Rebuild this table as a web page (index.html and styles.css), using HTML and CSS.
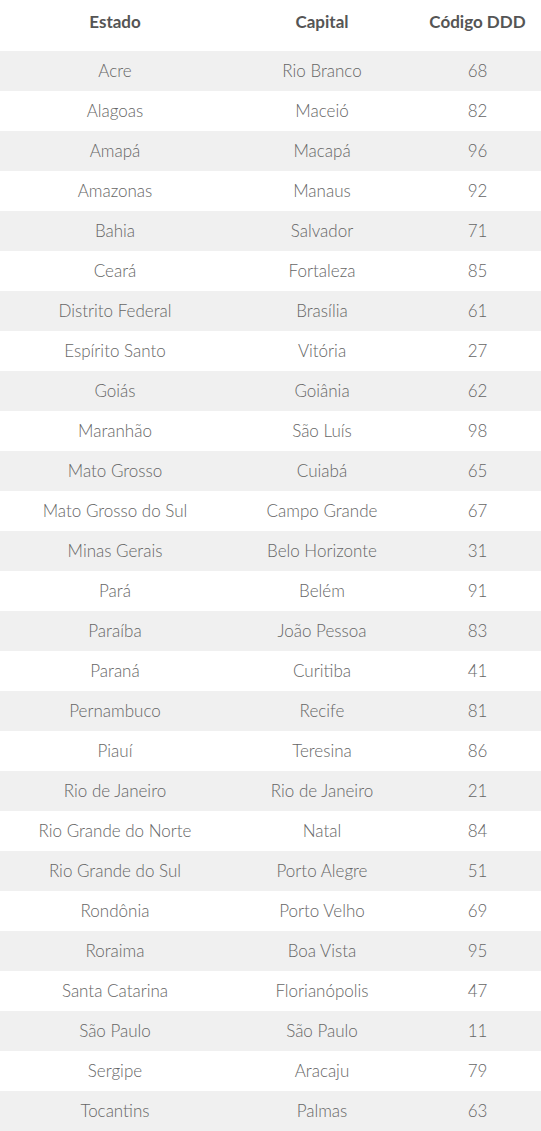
FILE: index.html
```html
<!DOCTYPE html>
<html lang="pt-BR">
<head>
<meta charset="utf-8">
<title>Códigos DDD das capitais</title>
<link rel="stylesheet" href="styles.css">
</head>
<body>
<table class="ddd">
  <colgroup><col class="c1"><col class="c2"><col class="c3"></colgroup>
  <thead>
    <tr><th>Estado</th><th>Capital</th><th>Código DDD</th></tr>
  </thead>
  <tbody>
    <tr><td>Acre</td><td>Rio Branco</td><td>68</td></tr>
    <tr><td>Alagoas</td><td>Maceió</td><td>82</td></tr>
    <tr><td>Amapá</td><td>Macapá</td><td>96</td></tr>
    <tr><td>Amazonas</td><td>Manaus</td><td>92</td></tr>
    <tr><td>Bahia</td><td>Salvador</td><td>71</td></tr>
    <tr><td>Ceará</td><td>Fortaleza</td><td>85</td></tr>
    <tr><td>Distrito Federal</td><td>Brasília</td><td>61</td></tr>
    <tr><td>Espírito Santo</td><td>Vitória</td><td>27</td></tr>
    <tr><td>Goiás</td><td>Goiânia</td><td>62</td></tr>
    <tr><td>Maranhão</td><td>São Luís</td><td>98</td></tr>
    <tr><td>Mato Grosso</td><td>Cuiabá</td><td>65</td></tr>
    <tr><td>Mato Grosso do Sul</td><td>Campo Grande</td><td>67</td></tr>
    <tr><td>Minas Gerais</td><td>Belo Horizonte</td><td>31</td></tr>
    <tr><td>Pará</td><td>Belém</td><td>91</td></tr>
    <tr><td>Paraíba</td><td>João Pessoa</td><td>83</td></tr>
    <tr><td>Paraná</td><td>Curitiba</td><td>41</td></tr>
    <tr><td>Pernambuco</td><td>Recife</td><td>81</td></tr>
    <tr><td>Piauí</td><td>Teresina</td><td>86</td></tr>
    <tr><td>Rio de Janeiro</td><td>Rio de Janeiro</td><td>21</td></tr>
    <tr><td>Rio Grande do Norte</td><td>Natal</td><td>84</td></tr>
    <tr><td>Rio Grande do Sul</td><td>Porto Alegre</td><td>51</td></tr>
    <tr><td>Rondônia</td><td>Porto Velho</td><td>69</td></tr>
    <tr><td>Roraima</td><td>Boa Vista</td><td>95</td></tr>
    <tr><td>Santa Catarina</td><td>Florianópolis</td><td>47</td></tr>
    <tr><td>São Paulo</td><td>São Paulo</td><td>11</td></tr>
    <tr><td>Sergipe</td><td>Aracaju</td><td>79</td></tr>
    <tr><td>Tocantins</td><td>Palmas</td><td>63</td></tr>
  </tbody>
</table>
</body>
</html>
```
FILE: styles.css
```css
html, body {
  margin: 0;
  padding: 0;
  background: #fff;
}
.ddd {
  width: 541px;
  border-collapse: collapse;
  table-layout: fixed;
  font-family: "Lato", "Open Sans", sans-serif;
  color: #666;
}
.c1 { width: 230px; }
.c2 { width: 184px; }
.c3 { width: 127px; }
.ddd th {
  height: 51px;
  padding: 0 0 9px;
  box-sizing: border-box;
  font-size: 17px;
  font-weight: 700;
  color: #555;
  text-align: center;
  vertical-align: middle;
}
.ddd td {
  height: 40px;
  padding: 0 0 1px;
  box-sizing: border-box;
  font-size: 17px;
  font-weight: 300;
  text-align: center;
  vertical-align: middle;
}
.ddd tbody tr:nth-child(odd) {
  background: #f0f0f0;
}
```
